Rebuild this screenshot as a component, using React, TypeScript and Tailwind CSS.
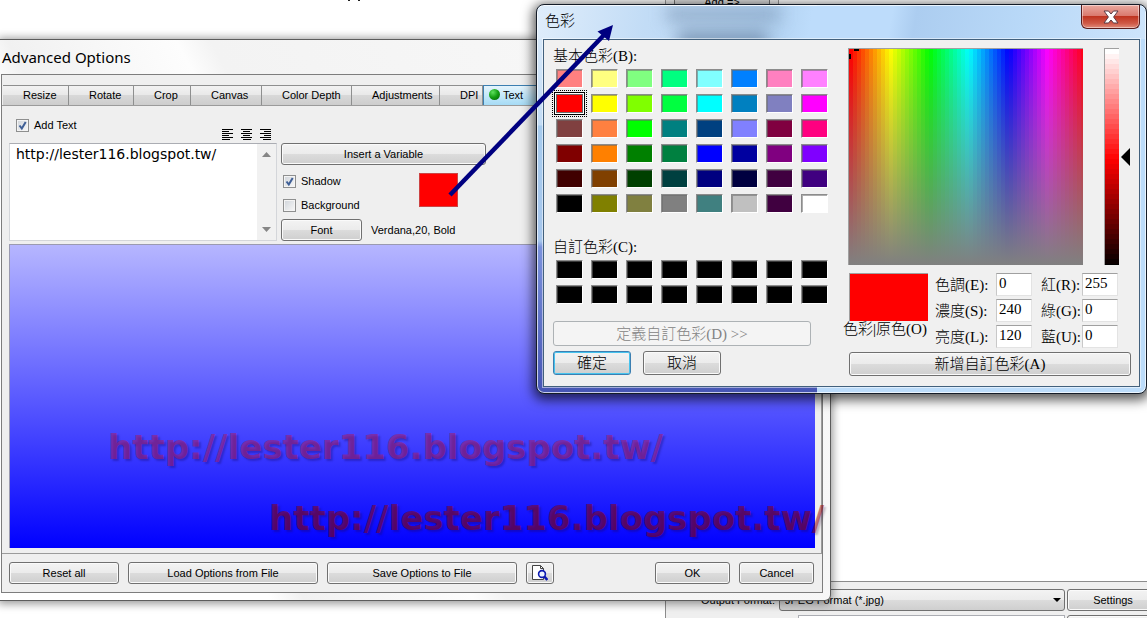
import { useState } from "react";
import type { ReactNode } from "react";
import clsx from "clsx";

const tabs = [
    { name: "Resize", width: "w-[66px]" },
    { name: "Rotate", width: "w-[65px]" },
    { name: "Crop", width: "w-[57px]" },
    { name: "Canvas", width: "w-[71px]" },
    { name: "Color Depth", width: "w-[90px]" },
    { name: "Adjustments", width: "w-[88px]" },
    { name: "DPI", width: "w-[43px]" },
];

const basicColors = [
    "#ff8080", "#ffff80", "#80ff80", "#00ff80", "#80ffff", "#0080ff", "#ff80c0", "#ff80ff",
    "#ff0000", "#ffff00", "#80ff00", "#00ff40", "#00ffff", "#0080c0", "#8080c0", "#ff00ff",
    "#804040", "#ff8040", "#00ff00", "#008080", "#004080", "#8080ff", "#800040", "#ff0080",
    "#800000", "#ff8000", "#008000", "#008040", "#0000ff", "#0000a0", "#800080", "#8000ff",
    "#400000", "#804000", "#004000", "#004040", "#000080", "#000040", "#400040", "#400080",
    "#000000", "#808000", "#808040", "#808080", "#408080", "#c0c0c0", "#400040", "#ffffff",
];

const customColors = Array.from({ length: 16 }, () => "#000000");

const channels = [
    [{ id: "hue", label: "色調(E):", value: "0" }, { id: "red", label: "紅(R):", value: "255" }],
    [{ id: "sat", label: "濃度(S):", value: "240" }, { id: "green", label: "綠(G):", value: "0" }],
    [{ id: "lum", label: "亮度(L):", value: "120" }, { id: "blue", label: "藍(U):", value: "0" }],
];

function PushButton({ children, className }: { children: ReactNode; className?: string }) {
    return (
        <button
            type="button"
            className={clsx(
                "flex items-center justify-center rounded-[3px] border shadow-[inset_0_0_0_1px_#fafafa]",
                "whitespace-nowrap bg-[linear-gradient(#f3f3f3,#ebebeb_50%,#dcdcdc_50%,#cfcfcf)]",
                className ?? "border-[#707070]"
            )}
        >
            {children}
        </button>
    );
}

function CheckBox({ label, checked }: { label: string; checked?: boolean }) {
    return (
        <label className="flex items-center gap-[5px]">
            <span className="relative flex">
                <input
                    type="checkbox"
                    defaultChecked={checked}
                    className="peer size-[13px] appearance-none border border-[#8e8f8f] bg-[linear-gradient(135deg,#cfd4da,#f8f8f8)] shadow-[inset_0_0_0_1px_#f4f4f4]"
                />
                <svg viewBox="0 0 13 13" className="pointer-events-none absolute inset-0 hidden size-[13px] peer-checked:block">
                    <path d="M3.5 6.5 L5.8 9.5 L9.7 3" fill="none" stroke="#3f5f96" strokeWidth="2" />
                </svg>
            </span>
            {label}
        </label>
    );
}

function AlignIcon({ align }: { align: "left" | "center" | "right" }) {
    const rows = [11, 7, 11, 7, 11, 8];
    return (
        <svg width="11" height="12" viewBox="0 0 11 12" shapeRendering="crispEdges">
            {rows.map((w, i) => {
                const x = align === "left" ? 0 : align === "right" ? 11 - w : Math.round((11 - w) / 2);
                return <rect key={i} x={x} y={i * 2} width={w} height="1" fill="#000" />;
            })}
        </svg>
    );
}

function Swatches({ colors, selected, onSelect }: { colors: string[]; selected?: number; onSelect?: (i: number) => void }) {
    return (
        <div className="grid grid-cols-[repeat(8,27px)] gap-x-2 gap-y-1.5 pl-[3px]">
            {colors.map((color, i) => (
                <button
                    key={i}
                    type="button"
                    aria-label={color}
                    onClick={() => onSelect?.(i)}
                    className={clsx(
                        "h-[19px] border",
                        i === selected
                            ? "border-[#696969] shadow-[0_0_0_1px_#fff,0_0_0_2px_#000] outline outline-offset-3 outline-black [outline-style:dotted]"
                            : "border-t-[#8c8c8c] border-r-white border-b-white border-l-[#8c8c8c] shadow-[inset_1px_1px_0_rgba(105,105,105,0.55)]"
                    )}
                    style={{ backgroundColor: color }}
                />
            ))}
        </div>
    );
}

function MainWindow() {
    return (
        <>
            <div className="absolute top-0 left-[348px] flex gap-2">
                <span className="h-px w-[2px] bg-[#222]" />
                <span className="h-px w-[2px] bg-[#222]" />
            </div>
            <div className="absolute top-0 bottom-[37px] left-[665px] w-[114px] border-x border-[#9a9a9a] bg-[#efefef] px-2">
                <div className="flex h-4 items-start justify-center border-x border-[#777] bg-[#ddd] leading-1">Add =&gt;</div>
            </div>
            <div className="absolute right-0 bottom-0 left-[665px] flex h-[37px] flex-col gap-1 overflow-hidden border-t border-l border-[#8c8c8c] bg-[#efefef] pt-[7px]">
                <div className="flex h-[22px] shrink-0 items-center">
                    <label htmlFor="format" className="w-[109px] shrink-0 text-right">Output Format:</label>
                    <div className="relative ml-1 flex-1">
                        <select
                            id="format"
                            className="h-[22px] w-full appearance-none rounded-[3px] border border-[#707070] bg-[linear-gradient(#f3f3f3,#ebebeb_50%,#dcdcdc_50%,#cfcfcf)] px-[5px]"
                        >
                            <option>JPEG Format (*.jpg)</option>
                        </select>
                        <svg viewBox="0 0 8 4" className="pointer-events-none absolute top-[9px] right-1 h-1 w-2">
                            <path d="M0 0 H8 L4 4 Z" />
                        </svg>
                    </div>
                    <PushButton className="ml-0.5 -mr-3 h-[22px] w-[92px] border-[#707070]">Settings</PushButton>
                </div>
                <div className="flex shrink-0">
                    <input aria-label="Output path" className="ml-[132px] h-5 flex-1 border border-[#abadb3] bg-white" />
                    <PushButton className="ml-0.5 -mr-3 h-5 w-[92px] border-[#707070]">{null}</PushButton>
                </div>
            </div>
        </>
    );
}

function AdvancedOptions() {
    return (
        <section className="absolute top-[39px] right-[316px] left-0 rounded-br-md border-t border-r border-b border-[#5c5c5c] bg-white bg-[linear-gradient(62deg,#fff_24%,#f1f1f1_27%,#fdfdfd_42%,#f3f3f3_45%,#fafafa)] pr-[7px] pb-[7px] pl-px shadow-[0_1px_8px_2px_rgba(0,0,0,0.4)]">
            <h1 className="flex h-[34px] items-center pl-px font-['Noto_Sans','Open_Sans',sans-serif] text-[15px]">Advanced Options</h1>
            <div className="border border-[#7d7d7d] bg-[#efefef] pt-2.5">
                <nav className="flex h-5 pl-px">
                    {tabs.map((tab) => (
                        <button
                            key={tab.name}
                            type="button"
                            className={clsx(
                                tab.width,
                                "shrink-0 border-t border-r border-[#8e8f8f] bg-[linear-gradient(#f2f2f2,#e8e8e8_50%,#d8d8d8_50%,#cdcdcd)] pb-0.5 pl-5 text-left whitespace-nowrap"
                            )}
                        >
                            {tab.name}
                        </button>
                    ))}
                    <button type="button" className="flex w-[60px] items-center gap-[3px] border-t border-l border-[#3c7fb1] bg-[linear-gradient(#e5f4fc,#c4e8fa_50%,#a6dbf5)] pb-0.5 pl-[5px]">
                        <span className="size-[11px] rounded-full bg-[radial-gradient(circle_at_35%_30%,#5ee05e,#119c11_50%,#055d05)]" />
                        Text
                    </button>
                </nav>

                <div className="border-t border-r border-b border-[#9b9b9b] pr-1.5 pb-[5px] pl-[7px]">
                    <div className="flex h-[37px] w-[267px] justify-between pr-[5px] pl-[7px]">
                        <div className="pt-[11px]">
                            <CheckBox label="Add Text" checked />
                        </div>
                        <div className="flex items-end gap-2 pb-0.5">
                            <button type="button" aria-label="Align left"><AlignIcon align="left" /></button>
                            <button type="button" aria-label="Align center"><AlignIcon align="center" /></button>
                            <button type="button" aria-label="Align right"><AlignIcon align="right" /></button>
                        </div>
                    </div>

                    <div className="flex gap-1">
                        <div className="flex h-[98px] w-[268px] border border-[#d4d6da] border-t-[#abadb3] bg-white">
                            <textarea
                                aria-label="Text"
                                spellCheck={false}
                                defaultValue="http://lester116.blogspot.tw/"
                                className="flex-1 resize-none overflow-hidden px-1.5 pt-0.5 font-['DejaVu_Sans',sans-serif] text-sm leading-4 whitespace-nowrap"
                            />
                            <div className="flex w-[19px] flex-col items-center justify-between bg-[#f1f1f1] py-2">
                                <svg width="9" height="5" viewBox="0 0 9 5"><path d="M0 5 L4.5 0 L9 5 Z" fill="#868686" /></svg>
                                <svg width="9" height="5" viewBox="0 0 9 5"><path d="M0 0 L4.5 5 L9 0 Z" fill="#868686" /></svg>
                            </div>
                        </div>
                        <div className="flex w-[205px] flex-col justify-between">
                            <PushButton className="h-[22px] border-[#707070]">Insert a Variable</PushButton>
                            <div className="flex items-start justify-between pr-7 pl-0.5">
                                <div className="flex flex-col gap-2 pt-0.5">
                                    <CheckBox label="Shadow" checked />
                                    <CheckBox label="Background" />
                                </div>
                                <button type="button" aria-label="Text color" className="mt-0.5 h-[34px] w-[39px] border border-[#c44] bg-[#ff0000]" />
                            </div>
                            <div className="flex items-center gap-[9px] whitespace-nowrap">
                                <PushButton className="h-[22px] w-[81px] border-[#707070]">Font</PushButton>
                                Verdana,20, Bold
                            </div>
                        </div>
                    </div>

                    <div className="mt-[3px] h-[304px] border-t border-l border-[#9a9ab0] bg-[linear-gradient(#b6b6ff,#0000ff)]" />
                </div>

                <footer className="flex gap-[9px] py-2 pr-2 pl-[7px]">
                    <PushButton className="h-[22px] w-[110px] border-[#707070]">Reset all</PushButton>
                    <PushButton className="h-[22px] w-[190px] border-[#707070]">Load Options from File</PushButton>
                    <PushButton className="h-[22px] w-[190px] border-[#707070]">Save Options to File</PushButton>
                    <PushButton className="h-[22px] w-7 border-[#707070]">
                        <svg aria-label="Preview" width="16" height="16" viewBox="0 0 16 16">
                            <path d="M0.5 0.5 H8.5 L11.5 3.5 V14.5 H0.5 Z" fill="#fff" stroke="#444" />
                            <path d="M8.5 0.5 V3.5 H11.5" fill="none" stroke="#444" />
                            <circle cx="10" cy="9" r="3.4" fill="#eaf2ff" stroke="#0a18b0" strokeWidth="1.6" />
                            <path d="M12.3 11.5 L15.3 15" stroke="#0a18b0" strokeWidth="2.6" />
                        </svg>
                    </PushButton>
                    <PushButton className="ml-auto h-[22px] w-[75px] border-[#707070]">OK</PushButton>
                    <PushButton className="h-[22px] w-[75px] border-[#707070]">Cancel</PushButton>
                </footer>
            </div>
        </section>
    );
}

function Spectrum() {
    return (
        <div className="relative h-[217px] w-[235px] overflow-hidden border-t border-l border-[#a0a0a0]">
            <div className="flex h-full">
                {Array.from({ length: 59 }, (_, i) => (
                    <span key={i} className="w-1 shrink-0" style={{ backgroundColor: `hsl(${(i * 360) / 59} 100% 50%)` }} />
                ))}
            </div>
            <div className="absolute inset-0 bg-[linear-gradient(transparent,#808080)]" />
            <span className="absolute top-0 left-[5px] h-0.5 w-[5px] bg-black" />
            <span className="absolute top-[5px] left-0 h-[5px] w-0.5 bg-black" />
        </div>
    );
}

function ColorDialog() {
    const [selected, setSelected] = useState(8);

    return (
        <section className="absolute top-1 right-0 left-[536px] rounded-lg border border-[#141c28] bg-[#bcdcfa] bg-[linear-gradient(#dcebfa,#c3dcf5_120px,#a6cbee_121px,#a6c6ec_236px,#7b92dc_242px,#4655b4)] bg-[length:280px_100%] bg-no-repeat px-1.5 pb-1.5 font-['Liberation_Serif','Noto_Sans_CJK_TC',serif] text-[15px] font-light shadow-[0_3px_12px_3px_rgba(0,0,0,0.65),inset_0_0_0_1px_rgba(255,255,255,0.7)]">
            <div className="absolute inset-x-px top-px h-[33px] overflow-hidden rounded-t-md bg-[linear-gradient(100deg,#dfedfb,#c2dcf6_18%,#b4d4f3_40%,#bddcfb_45%,#bddcfb_58%,#accdf0_62%,#b9d9f8_80%,#cde4fb)]">
                <div className="absolute top-0 left-[128px] h-4 w-[114px] bg-[#6d88a8]/50 blur-sm" />
                <div className="absolute top-6 left-[140px] h-6 w-[90px] bg-[#5c7898]/60 blur-sm" />
            </div>
            <header className="relative flex h-[34px] items-start justify-between pl-0.5">
                <h2 className="pt-1.5 leading-5">色彩</h2>
                <button
                    type="button"
                    aria-label="Close"
                    className="flex h-6 w-[59px] items-center justify-center rounded-b-md border border-t-0 border-[#5a1d1d] bg-[linear-gradient(#eaa9a0,#d9786c_48%,#bf3420_50%,#cf5a48_80%,#e08c7c)] shadow-[inset_0_0_0_1px_rgba(255,255,255,0.45)]"
                >
                    <svg width="16" height="14" viewBox="0 0 16 14">
                        <path
                            d="M1 1 H5.5 L8 4 L10.5 1 H15 L10.6 7 L15 13 H10.5 L8 10 L5.5 13 H1 L5.4 7 Z"
                            fill="#fff"
                            stroke="#5b3a44"
                        />
                    </svg>
                </button>
            </header>

            <div className="relative flex h-[348px] justify-between border border-[#42607c] bg-[#f0f0f0] pr-2 pl-[9px] shadow-[0_0_0_1px_rgba(255,255,255,0.5)]">
                <div className="flex w-[290px] flex-col pt-1.5">
                    <h3 className="mb-[3px] h-5 leading-5">基本色彩(B):</h3>
                    <Swatches colors={basicColors} selected={selected} onSelect={setSelected} />
                    <h3 className="mt-6 mb-[3px] h-5 leading-5">自訂色彩(C):</h3>
                    <Swatches colors={customColors} />
                    <button
                        type="button"
                        disabled
                        className="mt-[17px] h-[25px] w-[258px] shrink-0 rounded-[3px] border border-[#adb2b5] bg-[#f4f4f4] leading-5 text-[#838383]"
                    >
                        定義自訂色彩(D) &gt;&gt;
                    </button>
                    <div className="mt-[5px] flex gap-3">
                        <PushButton className="h-6 w-[78px] border-[#3c7fb1] ring-1 ring-[#46c3ee] ring-inset">確定</PushButton>
                        <PushButton className="h-6 w-[78px] border-[#707070]">取消</PushButton>
                    </div>
                </div>

                <div className="flex w-[290px] flex-col pt-2">
                    <div className="flex pl-1.5">
                        <Spectrum />
                        <div className="ml-[21px] flex h-[217px] w-[15px] flex-col overflow-hidden border-t border-l border-[#a0a0a0]">
                            {Array.from({ length: 44 }, (_, i) => (
                                <span key={i} className="h-[5px] shrink-0" style={{ backgroundColor: `hsl(0 100% ${100 - (i * 100) / 43}%)` }} />
                            ))}
                        </div>
                        <svg width="9" height="18" viewBox="0 0 9 18" className="mt-[100px] ml-0.5 shrink-0">
                            <path d="M9 0 V18 L0 9 Z" />
                        </svg>
                    </div>

                    <div className="mt-2 flex">
                        <div className="flex w-[86px] flex-col items-center whitespace-nowrap">
                            <div className="ml-1.5 h-12 w-[79px] border-t border-l border-[#a0a0a0] bg-[#ff0000]" />
                            <span className="-mt-0.5 leading-5">色彩|原色(O)</span>
                        </div>
                        <div className="ml-[7px] flex flex-col gap-[3px]">
                            {channels.map((row) => (
                                <div key={row[0].id} className="flex">
                                    {row.map((c, i) => (
                                        <div key={c.id} className="flex items-center">
                                            <label htmlFor={c.id} className={clsx("whitespace-nowrap", i ? "ml-[9px] w-[41px]" : "w-[61px]")}>
                                                {c.label}
                                            </label>
                                            <input
                                                id={c.id}
                                                defaultValue={c.value}
                                                className="h-[23px] w-9 border border-[#e3e3e3] border-t-[#a0a0a0] border-l-[#c8c8c8] bg-white px-0.5 pb-0.5"
                                            />
                                        </div>
                                    ))}
                                </div>
                            ))}
                        </div>
                    </div>
                    <PushButton className="mt-1 ml-[7px] h-6 shrink-0 border-[#707070]">新增自訂色彩(A)</PushButton>
                </div>
            </div>
        </section>
    );
}

export default function App() {
    return (
        <main className="relative h-screen overflow-hidden bg-white font-['Liberation_Sans',Arial,sans-serif] text-[11px] leading-4 text-black">
            <MainWindow />
            <AdvancedOptions />
            <ColorDialog />

            {/* watermarks float above every window */}
            <div className="pointer-events-none absolute top-[427px] left-[108px] font-['DejaVu_Sans',sans-serif] text-[34px] leading-10 font-bold whitespace-nowrap text-[#a81c68]/55 [text-shadow:2px_2px_2px_rgba(20,0,90,0.3)]">
                http://lester116.blogspot.tw/
            </div>
            <div className="pointer-events-none absolute top-[498px] left-[269px] font-['DejaVu_Sans',sans-serif] text-[34px] leading-10 font-bold whitespace-nowrap text-[#960000]/50 [text-shadow:2px_2px_2px_rgba(40,0,40,0.25)]">
                http://lester116.blogspot.tw/
            </div>

            <svg width="170" height="180" viewBox="0 0 170 180" className="pointer-events-none absolute top-5 left-[448px]">
                <path d="M2 175 L156 15" stroke="#000080" strokeWidth="4.5" />
                <path d="M165 5 L149.5 11.5 L161 21 Z" fill="#000080" />
            </svg>
        </main>
    );
}
